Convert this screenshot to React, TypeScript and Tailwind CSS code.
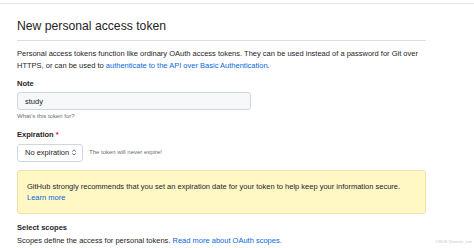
import React from 'react'

const font = { fontFamily: '"Liberation Sans", Arial, sans-serif' }

const UpDownIcon = () => (
  <svg width="6" height="7" viewBox="0 0 6 7" fill="none" stroke="#57606a" strokeWidth="0.9" aria-hidden="true">
    <path d="M1.2 2.6 L3 0.9 L4.8 2.6" />
    <path d="M1.2 4.4 L3 6.1 L4.8 4.4" />
  </svg>
)

export default function App() {
  return (
    <div className="relative h-[248px] w-[474px] overflow-hidden bg-white text-[#1f2328]" style={font}>
      <div className="mt-[3px] border-t border-[#e6e8eb]" />

      <div className="pl-[17px] w-[426px]">
        {/* Header */}
        <div className="mt-[13px] border-b border-[#d8dee4] pb-[5px]">
          <h2 className="text-[12.2px] leading-[18px] font-normal">New personal access token</h2>
        </div>

        <p className="mt-[7px] text-[7.5px] leading-[12.4px]">
          Personal access tokens function like ordinary OAuth access tokens. They can be used instead of a password for Git over
          HTTPS, or can be used to{' '}
          <a className="text-[#0969da]">authenticate to the API over Basic Authentication</a>.
        </p>

        {/* Note */}
        <div className="mt-[5px] text-[7.5px] leading-[12.6px] font-bold">Note</div>
        <div className="mt-[2px] flex h-[18px] w-[234px] items-center rounded-[3px] border border-[#d0d7de] bg-[#f6f8fa] px-[7px] text-[7.5px]">
          study
        </div>
        <div className="mt-[1px] text-[6px] leading-[10.8px] text-[#656d76]">What’s this token for?</div>

        {/* Expiration */}
        <div className="mt-[7px] text-[7.5px] leading-[12.6px] font-bold">
          Expiration <span className="text-[#d1242f]">*</span>
        </div>
        <div className="mt-[2px] flex items-center gap-[6px]">
          <div className="flex h-[18px] w-[66px] items-center justify-between whitespace-nowrap rounded-[3px] border border-[#d0d7de] bg-white pl-[7px] pr-[5px] text-[7.5px]">
            <span>No expiration</span>
            <UpDownIcon />
          </div>
          <span className="whitespace-nowrap text-[6px] text-[#656d76]">The token will never expire!</span>
        </div>

        {/* Warning */}
        <div className="mt-[8px] flex h-[44px] w-[409px] flex-col justify-center rounded-[3px] border border-[#f2e2a4] bg-[#fff8c5] px-[9px] text-[7.5px] leading-[11px]">
          <span>GitHub strongly recommends that you set an expiration date for your token to help keep your information secure.</span>
          <a className="text-[#0969da]">Learn more</a>
        </div>

        {/* Scopes */}
        <div className="mt-[8px] text-[7.5px] leading-[12.6px] font-bold">Select scopes</div>
        <div className="mt-[1px] text-[7.5px] leading-[12.6px]">
          Scopes define the access for personal tokens.{' '}
          <a className="text-[#0969da]">Read more about OAuth scopes.</a>
        </div>
      </div>

      <div className="absolute right-[2px] top-[239px] text-[4px] text-[#c8c8c8]">CSDN @weixin_xue</div>
    </div>
  )
}
